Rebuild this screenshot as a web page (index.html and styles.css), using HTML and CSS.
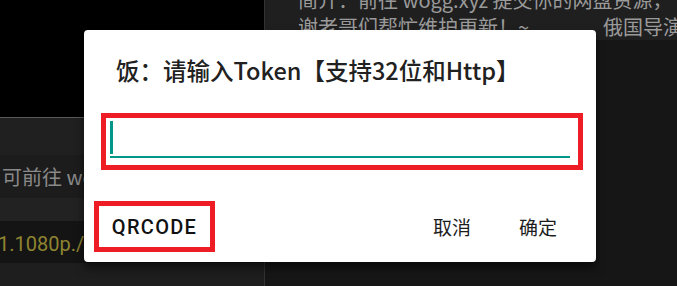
FILE: index.html
```html
<!DOCTYPE html>
<html lang="zh-CN">
<head>
<meta charset="utf-8">
<title>Token</title>
<link rel="stylesheet" href="styles.css">
</head>
<body>
<div class="app">
  <div class="left">
    <div class="player"></div>
    <div class="row row-a"></div>
    <div class="row row-b"><span class="muted">可前往 wogg.xyz 提交</span></div>
    <div class="row row-c"></div>
    <div class="row row-d"><span class="gold">1.1080p./</span></div>
    <div class="row row-e"></div>
  </div>
  <div class="right">
    <div class="desc">
      <p class="desc-line">简介：前往 wogg.xyz 提交你的网盘资源，</p>
      <p class="desc-line">谢老哥们帮忙维护更新！~<span class="gap"></span>俄国导演</p>
    </div>
    <div class="rest"></div>
  </div>
</div>

<div class="dialog">
  <div class="title">饭：请输入Token【支持32位和Http】</div>
  <div class="input-box">
    <div class="input">
      <span class="cursor"></span>
    </div>
  </div>
  <div class="actions">
    <div class="btn-qr">QRCODE</div>
    <div class="spacer"></div>
    <div class="btn">取消</div>
    <div class="btn btn-ok">确定</div>
  </div>
</div>
</body>
</html>
```

FILE: styles.css
```css
html, body {
  margin: 0;
  padding: 0;
}
body {
  width: 677px;
  height: 286px;
  overflow: hidden;
  background: #161616;
  font-family: "Noto Sans CJK SC", "Noto Sans", sans-serif;
  position: relative;
}
.app {
  display: grid;
  grid-template-columns: 264px 1fr;
  height: 286px;
}
.left {
  display: flex;
  flex-direction: column;
  overflow: hidden;
}
.player {
  height: 117px;
  background: #000;
  border-bottom: 1px solid #5a5a5a;
  flex: none;
}
.row {
  flex: none;
  display: flex;
  align-items: center;
  white-space: nowrap;
  font-size: 20px;
  overflow: hidden;
}
.row-a { height: 37px; background: #202020; }
.row-b { height: 43px; background: #1c1c1c; }
.row-c { height: 23px; background: #222; }
.row-d { height: 42px; background: #141414; padding-top: 4px; box-sizing: border-box; }
.row-e { flex: 1; background: #1e1e1e; }
.muted {
  color: #8a8a8a;
  margin-left: 2px;
  font-family: "Noto Sans CJK SC", Roboto, sans-serif;
}
.gold {
  color: #8f8430;
  font-family: Roboto, "Noto Sans", sans-serif;
  font-size: 20px;
  margin-left: -2px;
}
.right {
  display: flex;
  flex-direction: column;
  border-left: 1px solid #333;
  overflow: hidden;
}
.desc {
  background: #1f1f1f;
  height: 40px;
  padding-left: 33px;
  flex: none;
  overflow: hidden;
}
.desc-line {
  margin: 0;
  color: #9a9a9a;
  font-size: 20px;
  line-height: 27px;
  white-space: nowrap;
}
.desc-line:first-child {
  margin-top: -14px;
}
.gap {
  display: inline-block;
  width: 74px;
}
.rest {
  flex: 1;
  background: #161616;
}

.dialog {
  position: absolute;
  left: 84px;
  top: 30px;
  width: 512px;
  height: 232px;
  background: #fff;
  border-radius: 4px;
  box-shadow: 0 6px 10px rgba(0, 0, 0, 0.55);
  display: flex;
  flex-direction: column;
}
.title {
  margin: 25px 0 0 32px;
  font-size: 23.5px;
  line-height: 30px;
  font-weight: 500;
  color: #212121;
  white-space: nowrap;
}
.input-box {
  margin: 28px 13px 0 17px;
  height: 47px;
  border: 5px solid #ee1c25;
}
.input {
  margin: 3px 8px 0 4px;
  height: 35px;
  border-bottom: 2px solid #009688;
  display: flex;
}
.cursor {
  width: 3px;
  height: 33px;
  background: #009688;
}
.actions {
  margin-top: 31px;
  display: flex;
  align-items: center;
  height: 51px;
}
.btn-qr {
  margin-left: 10px;
  width: 111px;
  height: 41px;
  border: 5px solid #ee1c25;
  display: flex;
  align-items: center;
  justify-content: center;
  font-family: Roboto, "Noto Sans", sans-serif;
  font-weight: 500;
  font-size: 20px;
  letter-spacing: 1.3px;
  color: #111;
}
.spacer {
  flex: 1;
}
.btn {
  width: 64px;
  text-align: center;
  font-size: 19px;
  color: #1c1c1c;
  line-height: 26px;
}
.btn-ok {
  margin-left: 22px;
  margin-right: 26px;
}
```
